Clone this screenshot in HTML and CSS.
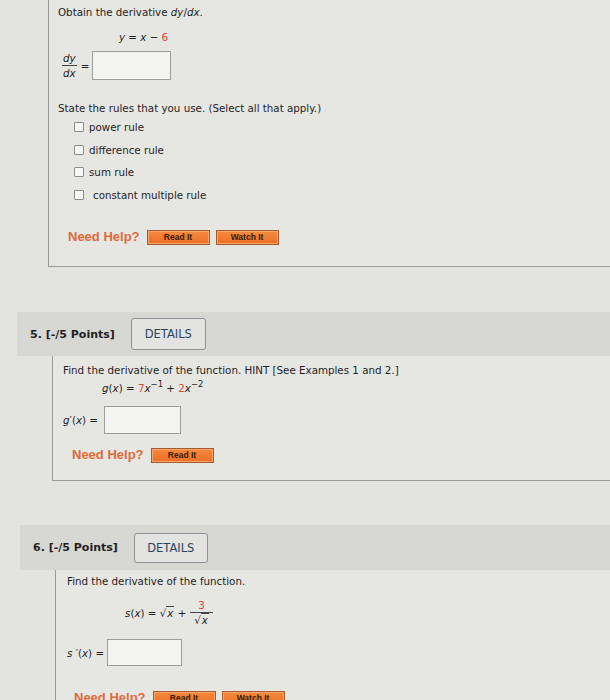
FILE: index.html
```html
<!DOCTYPE html>
<html>
<head>
<meta charset="utf-8">
<link rel="stylesheet" href="styles.css">
</head>
<body>
<div class="panel p4">
  <div class="txt first">Obtain the derivative <i>dy</i>/<i>dx</i>.</div>
  <div class="eq eq4"><i>y</i> = <i>x</i> &minus; <span class="red">6</span></div>
  <div class="ans ans4">
    <span class="frac"><span class="num"><i>dy</i></span><span class="den"><i>dx</i></span></span>
    <span class="eqs">=</span>
    <span class="box"></span>
  </div>
  <div class="txt rules">State the rules that you use. (Select all that apply.)</div>
  <div class="opts">
    <div class="opt"><span class="cb"></span>power rule</div>
    <div class="opt"><span class="cb"></span>difference rule</div>
    <div class="opt"><span class="cb"></span>sum rule</div>
    <div class="opt"><span class="cb"></span><span class="pad">constant multiple rule</span></div>
  </div>
  <div class="help help4"><span class="need">Need Help?</span><span class="btn">Read It</span><span class="btn">Watch It</span></div>
</div>

<div class="head h5"><span class="qn">5. [-/5 Points]</span><span class="details">DETAILS</span></div>
<div class="panel p5">
  <div class="txt">Find the derivative of the function. HINT [See Examples 1 and 2.]</div>
  <div class="eq eq5"><i>g</i>(<i>x</i>) = <span class="red">7</span><i>x</i><sup>&minus;1</sup> + <span class="red">2</span><i>x</i><sup>&minus;2</sup></div>
  <div class="ans ans5"><span class="lbl"><i>g</i>′(<i>x</i>) =</span><span class="box"></span></div>
  <div class="help help5"><span class="need">Need Help?</span><span class="btn">Read It</span></div>
</div>

<div class="head h6"><span class="qn">6. [-/5 Points]</span><span class="details">DETAILS</span></div>
<div class="panel p6">
  <div class="txt">Find the derivative of the function.</div>
  <div class="eq eq6">
    <span><i>s</i>(<i>x</i>) = <span class="sq">√<span class="rad"><i>x</i></span></span> +</span>
    <span class="frac"><span class="num red">3</span><span class="den"><span class="sq">√<span class="rad"><i>x</i></span></span></span></span>
  </div>
  <div class="ans ans6"><span class="lbl"><i>s</i> ′(<i>x</i>) =</span><span class="box"></span></div>
  <div class="help help6"><span class="need">Need Help?</span><span class="btn">Read It</span><span class="btn">Watch It</span></div>
</div>
</body>
</html>
```
FILE: styles.css
```css
html, body {
  margin: 0;
  padding: 0;
}
body {
  width: 610px;
  height: 700px;
  overflow: hidden;
  background: #e3e3e0;
  font-family: "DejaVu Sans", Verdana, sans-serif;
  font-size: 10.3px;
  color: #1f1f1f;
}
i { font-style: italic; }
.red { color: #d9473a; }
.panel {
  border-left: 1px solid #9a9a98;
  border-bottom: 1px solid #9a9a98;
  box-sizing: border-box;
  background: #e6e6e3;
}
.p4 {
  margin-left: 48px;
  height: 267px;
  padding: 6px 0 0 9px;
}
.txt { line-height: 12px; }
.eq { line-height: 14px; }
.eq4 { margin: 12px 0 0 61px; }
.ans {
  display: flex;
  align-items: center;
}
.ans4 { margin: 7px 0 0 4px; }
.frac {
  display: inline-flex;
  flex-direction: column;
  align-items: center;
}
.frac .num {
  line-height: 12px;
  padding: 0 1px 1px;
  border-bottom: 1px solid #444;
}
.frac .den { line-height: 13px; padding-top: 1px; }
.eqs { margin: 0 3px 0 4px; }
.box {
  display: inline-block;
  width: 77px;
  height: 27px;
  border: 1px solid #9d9d9b;
  background: #f3f3f1;
}
.rules { margin-top: 22px; }
.opts { margin: 2px 0 0 16px; }
.opt {
  display: flex;
  align-items: center;
  height: 22.6px;
}
.cb {
  display: inline-block;
  width: 8px;
  height: 8px;
  border: 1px solid #8c8c8a;
  border-radius: 1px;
  background: #f6f6f4;
  margin-right: 5px;
}
.pad { padding-left: 4px; }
.help {
  display: flex;
  align-items: center;
}
.help4 { margin: 23px 0 0 10px; }
.need {
  font-family: "Liberation Sans", Arial, sans-serif;
  font-weight: bold;
  font-size: 13px;
  color: #e06a36;
  margin-right: 7px;
  line-height: 16px;
}
.btn {
  display: inline-block;
  box-sizing: border-box;
  width: 63px;
  height: 15px;
  margin-right: 6px;
  background: linear-gradient(#f58a3c, #ec6e26);
  border: 1px solid #a95a2c;
  box-shadow: inset 0 0 0 1px #f7a56a;
  font-family: "Liberation Sans", Arial, sans-serif;
  font-size: 8.5px;
  font-weight: bold;
  color: #3a1a08;
  text-align: center;
  line-height: 13px;
}
.head {
  display: flex;
  align-items: center;
  background: #d7d7d4;
  box-sizing: border-box;
}
.qn {
  font-weight: bold;
  font-size: 11px;
  color: #1f1f1f;
}
.details {
  display: inline-flex;
  align-items: center;
  justify-content: center;
  box-sizing: border-box;
  border: 1px solid #8d8f92;
  border-radius: 3px;
  background: #e3e3e1;
  color: #2c4660;
  font-size: 11.5px;
}
.h5 {
  margin: 45px 0 0 17px;
  height: 44px;
  padding-left: 13px;
}
.h5 .details { width: 75px; height: 32px; margin-left: 16px; }
.p5 {
  margin-left: 52px;
  height: 125px;
  padding: 8px 0 0 10px;
}
.eq5 { margin: 5px 0 0 39px; }
.eq5 sup { font-size: 8.5px; vertical-align: 5px; line-height: 0; }
.ans5 { margin: 11px 0 0 0; }
.lbl { margin-right: 6px; }
.ans5 .box { width: 75px; height: 26px; }
.help5 { margin: 13px 0 0 9px; }
.h6 {
  margin: 44px 0 0 20px;
  height: 45px;
  padding-left: 13px;
}
.h6 .details { width: 74px; height: 30px; margin-left: 16px; }
.p6 {
  margin-left: 55px;
  height: 140px;
  padding: 5px 0 0 11px;
  border-bottom: none;
}
.eq6 {
  margin: 12px 0 0 58px;
  display: flex;
  align-items: center;
  gap: 4px;
}
.sq { white-space: nowrap; }
.rad { border-top: 1px solid #444; padding: 0 1px; }
.eq6 .frac .num { padding: 0 8px 1px; }
.ans6 { margin: 12px 0 0 0; }
.ans6 .lbl { margin-right: 3px; }
.ans6 .box { width: 73px; height: 25px; }
.help6 { margin: 24px 0 0 7px; }
```
